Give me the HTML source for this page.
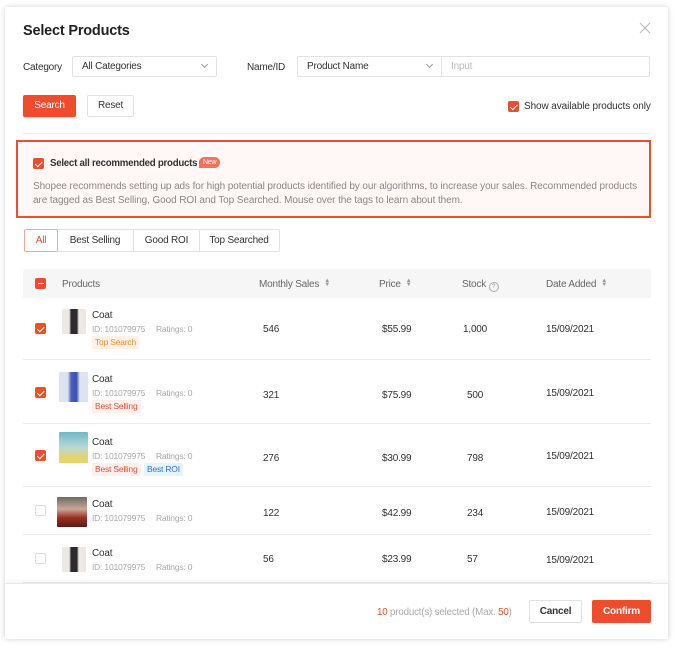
<!DOCTYPE html>
<html><head><meta charset="utf-8"><style>
*{box-sizing:border-box;margin:0;padding:0}
body{width:675px;height:648px;background:#fff;font-family:"Liberation Sans",Arial,sans-serif;color:#333;position:relative;overflow:hidden;font-size:10px;letter-spacing:-0.2px}
.dlg{position:absolute;left:5px;top:7px;width:663px;height:632px;background:#fff;box-shadow:0 0 6px rgba(0,0,0,.18);border-radius:2px}
.a{position:absolute}
.box{position:absolute;border:1px solid #e2e2e2;border-radius:2px;background:#fff;font-size:10px;line-height:20px;padding-left:9px}
.chev{position:absolute;right:9px;top:5px;width:5px;height:5px;border-right:1px solid #999;border-bottom:1px solid #999;transform:rotate(45deg)}
.cb{position:absolute;width:11px;height:11px;border-radius:2px;background:#ee4d2d}
.cb:after{content:"";position:absolute;left:3.5px;top:1.5px;width:3px;height:5.5px;border-right:1.3px solid #fff;border-bottom:1.3px solid #fff;transform:rotate(45deg)}
.cbe{position:absolute;width:11px;height:11px;border-radius:2px;border:1px solid #ddd;background:#fff}
.tab{position:absolute;top:229px;height:23px;border:1px solid #e2e2e2;line-height:22px;text-align:center;font-size:10px;color:#333}
.row{position:absolute;left:23px;width:628px;border-bottom:1px solid #ececec;font-size:10px}
.img{position:absolute;border-radius:1px}
.p1{background:linear-gradient(90deg,#ece8e4 30%,#2d2b2e 38%,#2d2b2e 62%,#ece8e4 70%)}
.nm{position:absolute;left:69px;font-size:10px;color:#333}
.id{position:absolute;left:69px;font-size:8.5px;color:#aaa;white-space:nowrap}
.tag{position:absolute;font-size:8.5px;padding:0 3px;line-height:13px;border-radius:1px}
.t1{background:#fff1e5;color:#ff8a1f}.t2{background:#fff0ee;color:#ee4d2d}.t3{background:#e8f3ff;color:#2673dd}
.v{position:absolute;font-size:10px;color:#333}
.h{position:absolute;top:10px;font-size:10px;color:#666}
.srt{display:inline-block;margin-left:5px;font-size:6px;line-height:4px;vertical-align:1px;color:#999}
</style></head><body>
<div class="dlg"></div>
<div class="a" style="left:23px;top:23px;font-size:14.5px;font-weight:bold;color:#222">Select Products</div>
<div class="a" style="left:639px;top:22px;width:12px;height:12px">
<svg width="12" height="12"><path d="M1 1L11 11M11 1L1 11" stroke="#b5b5b5" stroke-width="1"/></svg></div>
<div class="a" style="left:23px;top:62px">Category</div>
<div class="box" style="left:72px;top:56px;width:145px;height:21px">All Categories<span class="chev"></span></div>
<div class="a" style="left:247px;top:62px">Name/ID</div>
<div class="box" style="left:297px;top:56px;width:145px;height:21px;border-radius:2px 0 0 2px">Product Name<span class="chev"></span></div>
<div class="box" style="left:441px;top:56px;width:209px;height:21px;color:#bbb">Input</div>
<div class="a" style="left:23px;top:95px;width:53px;height:22px;background:#ee4d2d;border-radius:2px;color:#fff;text-align:center;line-height:22px;box-shadow:0 1px 2px rgba(0,0,0,.15)">Search</div>
<div class="a" style="left:87px;top:95px;width:47px;height:22px;border:1px solid #e2e2e2;border-radius:2px;text-align:center;line-height:20px">Reset</div>
<div class="cb" style="left:508px;top:101px"></div>
<div class="a" style="left:524px;top:101px;letter-spacing:-0.1px">Show available products only</div>
<div class="a" style="left:23px;top:133px;width:628px;height:1px;background:#eee"></div>
<div class="a" style="left:16px;top:140px;width:635px;height:78px;border:2px solid #ee4d2d;background:#fff8f6"></div>
<div class="cb" style="left:33px;top:158px"></div>
<div class="a" style="left:50px;top:158px;font-size:9.7px;font-weight:bold;color:#333;letter-spacing:-0.25px">Select all recommended products</div>
<div class="a" style="left:199px;top:157px;height:11px;padding:0 4px;background:#f7705a;border-radius:6px 6px 6px 0;color:#fff;font-size:7px;line-height:11px">New</div>
<div class="a" style="left:33px;top:180px;width:620px;font-size:10px;color:#888;line-height:13.5px;letter-spacing:-0.1px;white-space:nowrap">Shopee recommends setting up ads for high potential products identified by our algorithms, to increase your sales. Recommended products<br>are tagged as Best Selling, Good ROI and Top Searched. Mouse over the tags to learn about them.</div>
<div class="tab" style="left:24px;width:34px;border-color:#f3a796;color:#ee4d2d;border-radius:2px 0 0 2px">All</div>
<div class="tab" style="left:57px;width:77px;border-left:none">Best Selling</div>
<div class="tab" style="left:133px;width:67px">Good ROI</div>
<div class="tab" style="left:199px;width:81px;border-left:none;border-radius:0 2px 2px 0">Top Searched</div>
<div class="row" style="top:269px;height:29px;background:#f6f6f6;border-radius:3px 3px 0 0;border:none">
<div style="position:absolute;left:12px;top:9px;width:11px;height:11px;background:#ee4d2d;border-radius:2px"><div style="position:absolute;left:2.5px;top:5px;width:6px;height:1.3px;background:#fff"></div></div>
<div class="h" style="left:39px">Products</div>
<div class="h" style="left:236px">Monthly Sales<span class="srt">▲<br>▼</span></div>
<div class="h" style="left:356px">Price<span class="srt">▲<br>▼</span></div>
<div class="h" style="left:439px">Stock <span style="display:inline-block;width:10px;height:10px;border:1px solid #aaa;border-radius:50%;font-size:6px;line-height:8px;text-align:center;color:#999;vertical-align:-1px">?</span></div>
<div class="h" style="left:523px">Date Added<span class="srt">▲<br>▼</span></div>
</div>
<div class="row" style="top:298px;height:62px">
<div class="cb" style="left:12px;top:25px"></div>
<div class="img p1" style="left:39px;top:11px;width:24px;height:25px"></div>
<div class="nm" style="top:12px">Coat</div><div class="id" style="top:26px">ID: 101079975 &nbsp;&nbsp;&nbsp; Ratings: 0</div>
<div class="tag t1" style="left:69px;top:38px">Top Search</div>
<div class="v" style="left:240px;top:26px">546</div><div class="v" style="left:359px;top:26px">$55.99</div><div class="v" style="left:440px;top:26px">1,000</div><div class="v" style="left:523px;top:26px">15/09/2021</div>
</div>
<div class="row" style="top:360px;height:64px">
<div class="cb" style="left:12px;top:27px"></div>
<div class="img" style="left:36px;top:12px;width:29px;height:30px;background:linear-gradient(90deg,#dde4ef 30%,#4b5fc0 42%,#3a4fb0 60%,#dde4ef 72%)"></div>
<div class="nm" style="top:14px">Coat</div><div class="id" style="top:28px">ID: 101079975 &nbsp;&nbsp;&nbsp; Ratings: 0</div>
<div class="tag t2" style="left:69px;top:40px">Best Selling</div>
<div class="v" style="left:240px;top:30px">321</div><div class="v" style="left:359px;top:30px">$75.99</div><div class="v" style="left:444px;top:30px">500</div><div class="v" style="left:523px;top:28px">15/09/2021</div>
</div>
<div class="row" style="top:424px;height:63px">
<div class="cb" style="left:12px;top:26px"></div>
<div class="img" style="left:36px;top:8px;width:29px;height:31px;background:linear-gradient(180deg,#6fb8c6,#b9d8d4 50%,#e7d36a 85%)"></div>
<div class="nm" style="top:13px">Coat</div><div class="id" style="top:27px">ID: 101079975 &nbsp;&nbsp;&nbsp; Ratings: 0</div>
<div class="tag t2" style="left:69px;top:39px">Best Selling</div><div class="tag t3" style="left:121px;top:39px">Best ROI</div>
<div class="v" style="left:240px;top:29px">276</div><div class="v" style="left:359px;top:29px">$30.99</div><div class="v" style="left:444px;top:29px">798</div><div class="v" style="left:523px;top:27px">15/09/2021</div>
</div>
<div class="row" style="top:487px;height:48px">
<div class="cbe" style="left:12px;top:18px"></div>
<div class="img" style="left:34px;top:10px;width:30px;height:30px;background:linear-gradient(180deg,#6b6a63,#c9a79a 40%,#9b2d22 70%,#5c1a14)"></div>
<div class="nm" style="top:12px">Coat</div><div class="id" style="top:26px">ID: 101079975 &nbsp;&nbsp;&nbsp; Ratings: 0</div>
<div class="v" style="left:240px;top:21px">122</div><div class="v" style="left:359px;top:21px">$42.99</div><div class="v" style="left:444px;top:21px">234</div><div class="v" style="left:523px;top:20px">15/09/2021</div>
</div>
<div class="row" style="top:535px;height:48px">
<div class="cbe" style="left:12px;top:18px"></div>
<div class="img p1" style="left:39px;top:12px;width:24px;height:25px"></div>
<div class="nm" style="top:13px">Coat</div><div class="id" style="top:27px">ID: 101079975 &nbsp;&nbsp;&nbsp; Ratings: 0</div>
<div class="v" style="left:240px;top:19px">56</div><div class="v" style="left:359px;top:19px">$23.99</div><div class="v" style="left:444px;top:19px">57</div><div class="v" style="left:523px;top:20px">15/09/2021</div>
</div>
<div class="a" style="left:5px;top:583px;width:663px;height:56px;background:#fff;border-top:1px solid #e8e8e8;box-shadow:0 -2px 4px rgba(0,0,0,.05)"></div>
<div class="a" style="left:377px;top:607px;font-size:9.8px;color:#aaa"><span style="color:#ee4d2d">10</span> product(s) selected (Max. <span style="color:#ee4d2d">50</span>)</div>
<div class="a" style="left:529px;top:600px;width:53px;height:23px;border:1px solid #e2e2e2;border-radius:2px;text-align:center;line-height:21px;font-weight:bold;color:#333">Cancel</div>
<div class="a" style="left:592px;top:600px;width:59px;height:23px;background:#ee4d2d;border-radius:2px;text-align:center;line-height:23px;font-weight:bold;color:#fff">Confirm</div>
</body></html>
